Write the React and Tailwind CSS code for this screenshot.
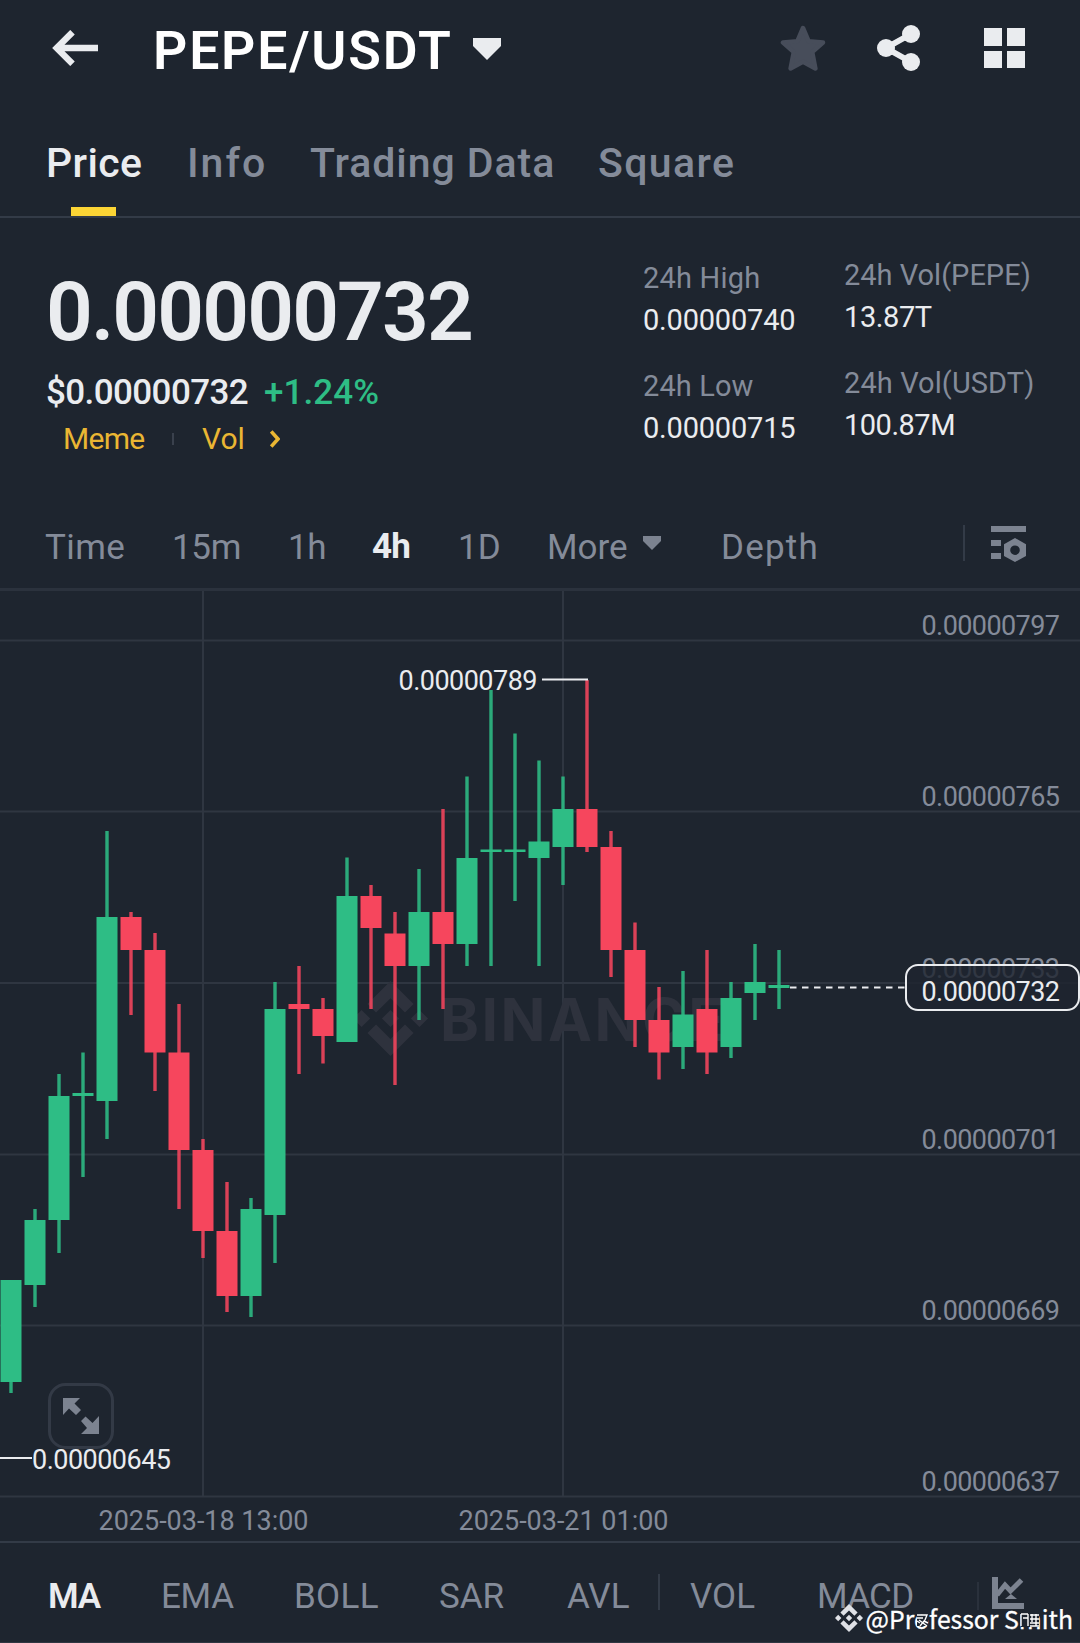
import clsx from "clsx";

const tabs = [
  { label: "Price", width: "w-[141px]", tracking: "tracking-[0.4px]", active: true },
  { label: "Info", width: "w-[123px]", tracking: "tracking-[2px]" },
  { label: "Trading Data", width: "w-[288px]", tracking: "tracking-[0.95px]" },
  { label: "Square", width: "w-[150px]", tracking: "tracking-[1.4px]" },
];

const indicators = [
  { label: "EMA", width: "w-[133px] tracking-[-0.3px]" },
  { label: "BOLL", width: "w-[145px] tracking-[0.3px]" },
  { label: "SAR", width: "w-[128px]" },
  { label: "AVL", width: "w-[91px]" },
];

// y positions: wick top, body top, body bottom, wick bottom
const candles = [
  ["up", 1280, 1280, 1382, 1393],
  ["up", 1209, 1220, 1285, 1307],
  ["up", 1074, 1096, 1220, 1253],
  ["up", 1052.5, 1093, 1096, 1177],
  ["up", 831, 917, 1101, 1139],
  ["down", 912, 917, 950, 1015],
  ["down", 933, 950, 1052.5, 1091],
  ["down", 1004, 1052.5, 1150, 1209],
  ["down", 1139, 1150, 1231, 1258],
  ["down", 1182, 1231, 1296, 1312],
  ["up", 1198, 1209, 1296, 1317],
  ["up", 982, 1009, 1215, 1263],
  ["down", 966, 1004, 1009, 1074],
  ["down", 998, 1009, 1036, 1063.5],
  ["up", 857.5, 896, 1042, 1042],
  ["down", 885, 896, 928, 1009],
  ["down", 912, 933.5, 966, 1085],
  ["up", 869, 912, 966, 1020],
  ["down", 809, 912, 944, 1009],
  ["up", 776.5, 858, 944, 966],
  ["up", 690, 849.5, 852, 966],
  ["up", 733.5, 849.5, 852, 901],
  ["up", 760.5, 841.5, 858, 966],
  ["up", 776.5, 809, 847, 885],
  ["down", 680, 809, 847, 852],
  ["down", 831, 847, 950, 977],
  ["down", 922.5, 950, 1020, 1047],
  ["down", 987, 1020, 1052.5, 1079.5],
  ["up", 971, 1014.5, 1047, 1069],
  ["down", 950, 1009, 1052.5, 1074],
  ["up", 982, 998, 1047, 1058],
  ["up", 944, 982, 993, 1020],
  ["up", 950, 985, 988, 1009],
];

const priceGrid = [
  { y: 640.5, label: "0.00000797" },
  { y: 811.5, label: "0.00000765" },
  { y: 983, label: "0.00000733" },
  { y: 1154.5, label: "0.00000701" },
  { y: 1325.5, label: "0.00000669" },
  { y: 1496.5, label: "0.00000637" },
];

function Caret({ className }) {
  return (
    <svg viewBox="0 0 28 22" preserveAspectRatio="none" className={className} fill="currentColor">
      <path d="M0 0H28V8L14 22L0 8Z" />
    </svg>
  );
}

function BinanceMark({ className }) {
  return (
    <svg viewBox="0 0 28 28" className={className} fill="currentColor">
      <MarkPath />
    </svg>
  );
}

function MarkPath() {
  return (
    <path d="M14 0L22.6 8.6L19.4 11.8L14 6.4L8.6 11.8L5.4 8.6ZM3.2 10.8L6.4 14L3.2 17.2L0 14ZM14 10.8L17.2 14L14 17.2L10.8 14ZM24.8 10.8L28 14L24.8 17.2L21.6 14ZM8.6 16.2L14 21.6L19.4 16.2L22.6 19.4L14 28L5.4 19.4Z" />
  );
}

function Header() {
  return (
    <header className="flex h-[100px] items-center pl-[52px] pr-[55px] text-[#eaecef]">
      <svg viewBox="0 0 46 36" className="h-9 w-[46px] -mt-1" fill="none" stroke="currentColor" strokeWidth="6.4">
        <path d="M46 18H5M20.5 2.2L4.7 18L20.5 33.8" />
      </svg>
      <h1 className="ml-[55px] mt-[2px] w-[320px] whitespace-nowrap text-[53.5px] font-semibold leading-none tracking-[1.8px] text-white">
        PEPE/USDT
      </h1>
      <Caret className="h-[22px] w-7 -mt-[2px]" />
      <div className="ml-auto flex items-center -mt-1">
        <svg viewBox="0 0 46 47" className="h-[47px] w-[46px] text-[#474d5a]" fill="currentColor">
          <path
            d="M23 3L28.6 16.2L43 17.6L32.2 27L35.4 43.5L23 36.8L10.6 43.5L13.8 27L3 17.6L17.4 16.2Z"
            stroke="currentColor"
            strokeWidth="4.5"
            strokeLinejoin="round"
          />
        </svg>
        <svg viewBox="0 0 43 46" className="ml-[51px] h-[46px] w-[43px]" fill="currentColor">
          <circle cx="9" cy="23" r="9" />
          <circle cx="34" cy="9" r="9" />
          <circle cx="34" cy="37" r="9" />
          <path d="M34 9L9 23L34 37" fill="none" stroke="currentColor" strokeWidth="6" />
        </svg>
        <div className="ml-[64px] grid h-10 w-[41px] grid-cols-2 gap-[5px]">
          <i className="bg-current" />
          <i className="bg-current" />
          <i className="bg-current" />
          <i className="bg-current" />
        </div>
      </div>
    </header>
  );
}

function Tabs() {
  return (
    <nav className="flex h-[118px] border-b-2 border-[#333b47] pl-[46px] pt-[33px] text-[41px] font-medium leading-[60px] text-[#848b99]">
      {tabs.map((tab) => (
        <div key={tab.label} className={clsx("flex flex-col whitespace-nowrap", tab.width, tab.tracking, tab.active && "text-[#eaecef]")}>
          {tab.label}
          {tab.active && <span className="ml-[25px] mt-[14px] h-[9px] w-[45px] bg-[#fcd535]" />}
        </div>
      ))}
    </nav>
  );
}

function Stat({ label, value, labelClass, valueClass }) {
  return (
    <div className="h-[108px] whitespace-nowrap leading-10">
      <p className={clsx("text-[29px] text-[#848b99]", labelClass)}>{label}</p>
      <p className={clsx("mt-[2px] text-[29px] text-[#eaecef]", valueClass)}>{value}</p>
    </div>
  );
}

function Summary() {
  return (
    <section className="flex h-[282px] whitespace-nowrap pl-[46px]">
      <div className="w-[597px] pt-[54px]">
        <p className="text-[82px] font-semibold leading-[80px] tracking-[-1.9px] text-[#eaecef]">0.00000732</p>
        <p className="mt-[21px] flex text-[35px] font-medium leading-10 text-[#eaecef]">
          <span className="w-[218px] tracking-[-0.6px]">$0.00000732</span>
          <span className="tracking-[0.1px] text-[#2ebd85]">+1.24%</span>
        </p>
        <p className="mt-[6px] flex items-center pl-[17px] text-[30px] leading-10 text-[#eab633]">
          <span className="w-[109px] tracking-[-0.7px]">Meme</span>
          <span className="h-3 w-[2px] bg-[#3a414d]" />
          <span className="ml-[28px] w-[68px]">Vol</span>
          <svg viewBox="0 0 10 18" className="h-[18px] w-[10px]" fill="none" stroke="currentColor" strokeWidth="3.6">
            <path d="M1.2 1.5L8 9L1.2 16.5" />
          </svg>
        </p>
      </div>
      <div className="w-[201px] pt-[40px]">
        <Stat label="24h High" value="0.00000740" labelClass="tracking-[0.2px]" valueClass="tracking-[-0.2px]" />
        <Stat label="24h Low" value="0.00000715" labelClass="tracking-[0.1px]" valueClass="tracking-[-0.2px]" />
      </div>
      <div className="pt-[37px]">
        <Stat label="24h Vol(PEPE)" value="13.87T" valueClass="tracking-[-0.4px]" />
        <Stat label="24h Vol(USDT)" value="100.87M" labelClass="tracking-[0.1px]" valueClass="tracking-[-0.5px]" />
      </div>
    </section>
  );
}

function Timeframes() {
  return (
    <nav className="flex h-[91px] items-center whitespace-nowrap border-b-[3px] border-[#2b323d] pl-[45px] pt-[8px] text-[35px] text-[#848b99]">
      <span className="w-[127px] tracking-[0.4px]">Time</span>
      <span className="w-[116px] tracking-[-0.3px]">15m</span>
      <span className="w-[84px] tracking-[-0.5px]">1h</span>
      <span className="w-[86px] -mt-[2px] font-bold tracking-[-0.8px] text-[#eaecef]">4h</span>
      <span className="w-[89px]">1D</span>
      <span className="w-[96px]">More</span>
      <Caret className="h-[14px] w-[18px] -mt-[11px] text-[#7c8390]" />
      <span className="ml-[60px] w-[242px] tracking-[1.2px]">Depth</span>
      <span className="h-9 w-[2px] -mt-[11px] bg-[#333b47]" />
      <svg viewBox="0 0 35 36" className="ml-[26px] -mt-[8px] h-9 w-[35px] text-[#7c8390]" fill="currentColor">
        <path d="M0 0H35V6H0ZM0 14H10V20H0ZM0 27H10V33H0Z" />
        <path fillRule="evenodd" d="M24 12L35 18.3V30L24 36L13 30V18.3ZM24 19.4A4.8 4.8 0 1 0 24 29A4.8 4.8 0 1 0 24 19.4Z" />
      </svg>
    </nav>
  );
}

function Chart() {
  return (
    <svg viewBox="0 591 1080 950" className="block h-[950px] w-[1080px]" fontSize="27" fontFamily="Roboto, sans-serif">
      <g stroke="#2f3641" strokeWidth="2">
        {priceGrid.map((row) => (
          <path key={row.y} d={`M0 ${row.y}H1080`} />
        ))}
        <path d="M203 591V1497M563 591V1497" />
      </g>

      <g fill="#2e323d">
        <g transform="translate(353 981) scale(2.68)">
          <MarkPath />
        </g>
        <text x="440" y="1040.5" fontSize="59" fontWeight="700" fontFamily="Inter, sans-serif" textLength="284">
          BINANCE
        </text>
      </g>

      {candles.map(([side, high, top, bottom, low], i) => {
        const x = 11 + i * 24;
        return (
          <g key={x} fill={side === "up" ? "#2ebd85" : "#f6465d"}>
            <rect x={x - 1.7} y={high} width="3.4" height={low - high} opacity="0.88" />
            <rect x={x - 10.5} y={top} width="21" height={bottom - top} />
          </g>
        );
      })}

      <g fill="#848b99">
        {priceGrid.map((row) => (
          <text key={row.y} x="921.5" y={Math.floor(row.y - 5)} textLength="138.5">
            {row.label}
          </text>
        ))}
        <text x="98.5" y="1530" textLength="210">2025-03-18 13:00</text>
        <text x="458.5" y="1530" textLength="210">2025-03-21 01:00</text>
      </g>

      {/* last price */}
      <path d="M790 987.5H905" stroke="#eaecef" strokeWidth="2" strokeDasharray="6.5 5.5" />
      <rect x="906" y="965" width="173" height="45" rx="12" fill="#1e252f" fillOpacity="0.82" stroke="#eaecef" strokeWidth="2" />

      <g fill="#eaecef">
        <text x="921.5" y="1001" textLength="138.5">0.00000732</text>
        <text x="398.5" y="690" textLength="139">0.00000789</text>
        <text x="32" y="1469" textLength="139">0.00000645</text>
        <path d="M542 678.5H588V680.5H542ZM0 1457H32V1459H0Z" />
      </g>

      {/* fullscreen button */}
      <rect x="49.5" y="1384.5" width="63" height="63" rx="16" fill="none" stroke="#333a46" strokeWidth="3" />
      <path
        d="M63 1398H80L74.5 1403.5L81 1410L76 1415L69 1408.500L63 1415ZM99 1434H81L87 1428L81 1421L85.500 1416.500L92.500 1423L99 1416Z"
        fill="#7c8390"
      />
    </svg>
  );
}

function Indicators() {
  return (
    <nav className="flex h-[102px] items-center whitespace-nowrap border-b border-t-2 border-b-[#2f3641] border-t-[#333b47] pl-[48px] pt-[10px] text-[35px] text-[#848b99]">
      <span className="w-[113px] font-semibold tracking-[-1.2px] text-[#eaecef]">MA</span>
      {indicators.map((item) => (
        <span key={item.label} className={item.width}>
          {item.label}
        </span>
      ))}
      <span className="h-9 w-[2px] -mt-[12px] bg-[#333b47]" />
      <span className="ml-[30px] w-[127px]">VOL</span>
      <span className="w-[160px] tracking-[-0.7px]">MACD</span>
      <span className="h-7 w-[2px] -mt-[4px] bg-[#2a313c]" />
      <svg viewBox="0 0 32 32" className="ml-[13px] -mt-[9px] h-8 w-8 text-[#7c8390]" fill="currentColor">
        <path d="M0 0H6V26H32V32H0Z" />
        <path d="M5 18L13 8L18.500 14L29.500 3" fill="none" stroke="currentColor" strokeWidth="5" />
        <path d="M19 17L25 22H13Z" />
      </svg>
    </nav>
  );
}

function Signature() {
  return (
    <div className="absolute bottom-[9px] right-[7px] flex items-center whitespace-nowrap text-white">
      <BinanceMark className="mr-[3px] h-7 w-7 text-[#dfe1e6]" />
      <span className="font-['Noto_Sans_CJK_SC',sans-serif] text-[24.8px] leading-8 [-webkit-text-stroke:0.3px_white]">@Professor Smith</span>
      {/* stamps over the name */}
      <svg viewBox="0 0 13 13" className="absolute right-[144px] top-[12px] h-[13px] w-[13px]" fill="none" stroke="white" strokeWidth="1.4">
        <path fill="#1e252f" stroke="none" d="M1 1H12V12H1Z" />
        <path d="M1 1H11L9 6L4 12M1 4H7M3 6L11 12M8 7L12 9M1 7L4 9" />
      </svg>
      <svg viewBox="0 0 20 14" className="absolute right-[33px] top-[11px] h-[14px] w-5" fill="none" stroke="white" strokeWidth="1.4">
        <path fill="#1e252f" stroke="none" d="M1 0H19V14H1Z" />
        <path d="M1 1V13M1 1H8M3 5H8M8 1V13M10 2H19M10 6H19M12 1V9M16 1V13M10 10H19M10 13H19" />
      </svg>
    </div>
  );
}

export default function App() {
  return (
    <main className="relative h-[1643px] w-[1080px] overflow-hidden bg-[#1e252f] font-['Roboto',sans-serif]">
      <Header />
      <Tabs />
      <Summary />
      <Timeframes />
      <Chart />
      <Indicators />
      <Signature />
    </main>
  );
}
